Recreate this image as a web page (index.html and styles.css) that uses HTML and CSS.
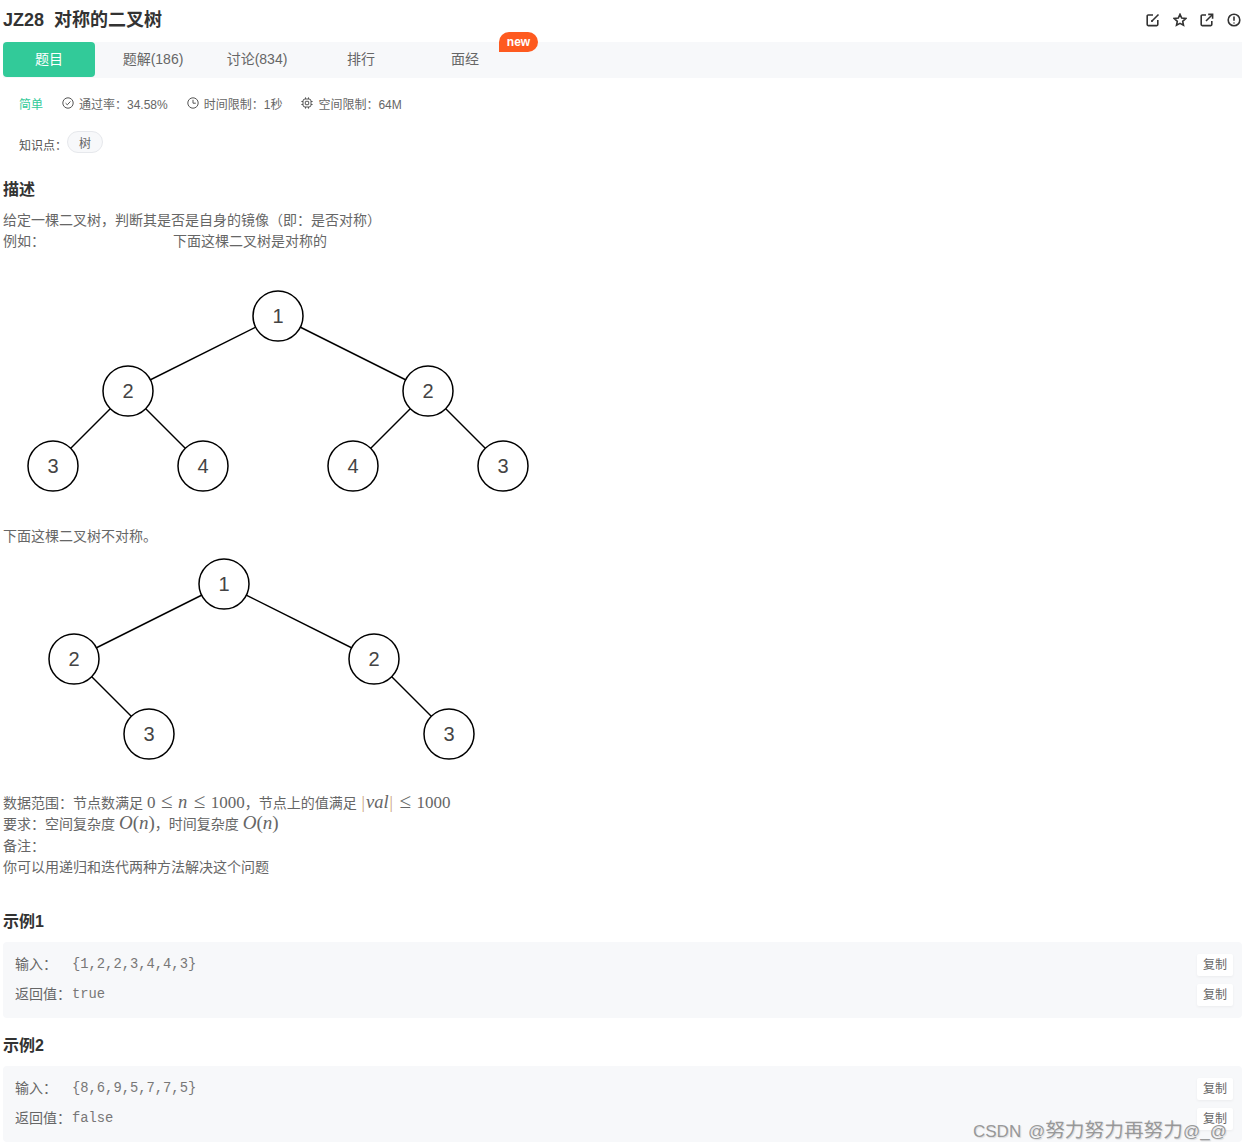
FILE: index.html
```html
<!DOCTYPE html>
<html lang="zh-CN">
<head>
<meta charset="utf-8">
<title>JZ28 对称的二叉树</title>
<link rel="stylesheet" href="styles.css">
</head>
<body>
<main class="page">
  <header class="title-row">
    <h1 class="title">JZ28&nbsp; 对称的二叉树</h1>
    <div class="actions">
      <svg class="action" viewBox="0 0 14 14"><path d="M7 2H2.2a1 1 0 0 0-1 1v8.6a1 1 0 0 0 1 1h8.6a1 1 0 0 0 1-1V7"/><path d="M5.5 8.5 12.5 1.5"/><path d="M5 9l2.2-.4L5.4 6.8z" class="fill"/></svg>
      <svg class="action" viewBox="0 0 14 14"><path d="M7 1.3 8.7 5l4 .5-3 2.8.8 4L7 10.3l-3.5 2 .8-4-3-2.8 4-.5z"/></svg>
      <svg class="action" viewBox="0 0 14 14"><path d="M6 2H2.2a1 1 0 0 0-1 1v8.6a1 1 0 0 0 1 1h8.6a1 1 0 0 0 1-1V8"/><path d="M6 8l6.3-6.3"/><path d="M8.2 1.4h4.4v4.4"/></svg>
      <svg class="action" viewBox="0 0 14 14"><circle cx="7" cy="7" r="5.8"/><path d="M7 3.5v4.3"/><path d="M7 9.4v1.2"/></svg>
    </div>
  </header>

  <nav class="tabs">
    <a class="tab tab-active">题目</a>
    <a class="tab">题解(186)</a>
    <a class="tab">讨论(834)</a>
    <a class="tab">排行</a>
    <a class="tab tab-new">面经<span class="badge">new</span></a>
  </nav>

  <div class="meta">
    <span class="level">简单</span>
    <span class="meta-item"><svg class="meta-icon" viewBox="0 0 12 12"><circle cx="6" cy="6" r="5.2"/><path d="M3.6 6.2 5.3 7.8 8.4 4.5"/></svg>通过率：34.58%</span>
    <span class="meta-item"><svg class="meta-icon" viewBox="0 0 12 12"><circle cx="6" cy="6" r="5.2"/><path d="M6 2.8V6.2H8.8"/></svg>时间限制：1秒</span>
    <span class="meta-item"><svg class="meta-icon" viewBox="0 0 12 12"><rect x="2" y="2" width="8" height="8" rx="2"/><rect x="4.3" y="4.3" width="3.4" height="3.4" rx=".6"/><path d="M4.5 .4V2M7.5 .4V2M4.5 10v1.6M7.5 10v1.6M.4 4.5H2M.4 7.5H2M10 4.5h1.6M10 7.5h1.6"/></svg>空间限制：64M</span>
  </div>

  <div class="topics">
    <span class="topics-label">知识点：</span><span class="pill">树</span>
  </div>

  <h2 class="heading">描述</h2>
  <p class="line">给定一棵二叉树，判断其是否是自身的镜像（即：是否对称）</p>
  <p class="line">例如：<span class="gap"></span>下面这棵二叉树是对称的</p>

  <svg class="tree tree-one" viewBox="0 0 530 246" width="530" height="246">
    <g class="edges">
      <line x1="275" y1="40" x2="125" y2="115"/><line x1="275" y1="40" x2="425" y2="115"/>
      <line x1="125" y1="115" x2="50" y2="190"/><line x1="125" y1="115" x2="200" y2="190"/>
      <line x1="425" y1="115" x2="350" y2="190"/><line x1="425" y1="115" x2="500" y2="190"/>
    </g>
    <g class="nodes">
      <circle cx="275" cy="40" r="25"/><circle cx="125" cy="115" r="25"/><circle cx="425" cy="115" r="25"/>
      <circle cx="50" cy="190" r="25"/><circle cx="200" cy="190" r="25"/><circle cx="350" cy="190" r="25"/><circle cx="500" cy="190" r="25"/>
    </g>
    <g class="labels">
      <text x="275" y="47">1</text><text x="125" y="122">2</text><text x="425" y="122">2</text>
      <text x="50" y="197">3</text><text x="200" y="197">4</text><text x="350" y="197">4</text><text x="500" y="197">3</text>
    </g>
  </svg>

  <p class="line line-after">下面这棵二叉树不对称。</p>

  <svg class="tree tree-two" viewBox="0 0 480 224" width="480" height="224">
    <g class="edges">
      <line x1="221" y1="28" x2="71" y2="103"/><line x1="221" y1="28" x2="371" y2="103"/>
      <line x1="71" y1="103" x2="146" y2="178"/><line x1="371" y1="103" x2="446" y2="178"/>
    </g>
    <g class="nodes">
      <circle cx="221" cy="28" r="25"/><circle cx="71" cy="103" r="25"/><circle cx="371" cy="103" r="25"/>
      <circle cx="146" cy="178" r="25"/><circle cx="446" cy="178" r="25"/>
    </g>
    <g class="labels">
      <text x="221" y="35">1</text><text x="71" y="110">2</text><text x="371" y="110">2</text>
      <text x="146" y="185">3</text><text x="446" y="185">3</text>
    </g>
  </svg>

  <p class="line">数据范围：节点数满足 <span class="math">0<span class="rel">≤</span><i class="var var-n">n</i><span class="rel">≤</span>1000</span>，节点上的值满足 <span class="math"><span class="abs">|</span><i class="var">val</i><span class="abs">|</span><span class="rel">≤</span>1000</span></p>
  <p class="line line-tall">要求：空间复杂度 <span class="math math-big"><i>O</i>(<i>n</i>)</span>，时间复杂度 <span class="math math-big"><i>O</i>(<i>n</i>)</span></p>
  <p class="line">备注：</p>
  <p class="line">你可以用递归和迭代两种方法解决这个问题</p>

  <h2 class="heading heading-example">示例1</h2>
  <section class="example">
    <div class="io"><span class="io-label">输入：</span><code class="io-value">{1,2,2,3,4,4,3}</code><button class="copy">复制</button></div>
    <div class="io"><span class="io-label">返回值：</span><code class="io-value">true</code><button class="copy">复制</button></div>
  </section>

  <h2 class="heading heading-example2">示例2</h2>
  <section class="example">
    <div class="io"><span class="io-label">输入：</span><code class="io-value">{8,6,9,5,7,7,5}</code><button class="copy">复制</button></div>
    <div class="io"><span class="io-label">返回值：</span><code class="io-value">false</code><button class="copy">复制</button></div>
  </section>
</main>
<div class="watermark">CSDN @<span class="watermark-cjk">努力努力再努力</span>@_@</div>
</body>
</html>
```

FILE: styles.css
```css
* { box-sizing: border-box; }
html, body { margin: 0; padding: 0; height: 1148px; overflow: hidden; background: #fff; }
body {
  position: relative;
  font-family: "Liberation Sans", "Noto Sans CJK SC", sans-serif;
  font-size: 14px;
  color: #666;
}
.page { padding-left: 3px; }

.title-row { height: 42px; display: flex; align-items: center; justify-content: space-between; padding-bottom: 2px; }
.title { margin: 0; font-size: 18px; font-weight: 700; color: #333; line-height: 24px; }
.actions { display: flex; gap: 13px; padding-right: 1px; }
.action { width: 14px; height: 14px; fill: none; stroke: #333; stroke-width: 1.6; }
.action .fill { fill: #333; stroke: none; }

.tabs { height: 36px; display: flex; background: #f7f8fa; gap: 12px; }
.tab { position: relative; width: 92px; height: 35px; padding-bottom: 4px; display: flex; align-items: center; justify-content: center; border-radius: 4px; color: #666; font-size: 14px; }
.tab-active { background: #32ca99; color: #fff; }
.badge {
  position: absolute; left: 80px; top: -10px; width: 39px; height: 20px;
  background: #fe5a1f; color: #fff; font-size: 12px; font-weight: 700;
  display: flex; align-items: center; justify-content: center;
  border-radius: 10px 10px 10px 0;
}

.meta { height: 20px; margin-top: 15px; padding-left: 16px; display: flex; align-items: center; font-size: 12px; color: #666; }
.level { color: #32ca99; margin-right: 19px; }
.meta-item { display: flex; align-items: center; margin-right: 19px; }
.meta-icon { width: 12px; height: 12px; margin-right: 5px; fill: none; stroke: #555; stroke-width: 1; }

.topics { height: 24px; margin-top: 17px; padding-left: 16px; display: flex; align-items: center; font-size: 12px; color: #555; }
.topics-label { padding-top: 4px; }
.pill { width: 36px; height: 22px; display: flex; align-items: center; justify-content: center; border: 1px solid #e6e8ec; border-radius: 11px; background: #f7f8fa; color: #666; }

.heading { margin: 0; font-size: 16px; line-height: 22px; font-weight: 700; color: #333; }
.topics + .heading { margin-top: 25px; }
.heading-example { margin-top: 33px; }
.heading-example2 { margin-top: 17px; }

.line { margin: 0; line-height: 21px; font-size: 14px; color: #666; }
.line-tall { margin-bottom: 1px; }
.heading + .line { margin-top: 9px; }
.gap { display: inline-block; width: 128px; }
.line-after { margin-top: 0; }

.tree { display: block; }
.tree-one { margin-top: 24px; margin-bottom: 4px; }
.tree-two { margin-top: 9px; margin-bottom: 13px; }
.edges line { stroke: #000; stroke-width: 1.5; }
.nodes circle { fill: #fff; stroke: #000; stroke-width: 1.5; }
.labels text { font-family: "Liberation Sans", sans-serif; font-size: 20px; text-anchor: middle; fill: #444; }

.math { font-family: "Liberation Serif", serif; font-size: 17px; line-height: 0; color: #666; }
.math-big { font-size: 19px; }
.rel { font-size: 21px; margin: 0 5.5px; line-height: 0; }
.var { font-size: 18.5px; }
.var-n { letter-spacing: 1px; }
.abs { color: #c9a27d; margin: 0 1px; }

.example { position: relative; height: 76px; margin-top: 9px; padding: 7px 0 0 12px; background: #f7f8fa; border-radius: 4px; }
.io { position: relative; height: 30px; display: flex; align-items: center; font-size: 14px; color: #666; }
.io-label { width: 57px; position: relative; top: -1px; }
.io-value { font-family: "Liberation Mono", monospace; font-size: 13.8px; color: #777; }
.copy {
  position: absolute; right: 9px; top: 5px; width: 36px; height: 22px; padding: 0 0 4px;
  border: 0; border-radius: 2px; background: #fff; color: #666;
  font-family: inherit; font-size: 12px; box-shadow: 0 1px 3px rgba(0,0,0,.05);
}

.watermark {
  position: absolute; left: 973px; top: 1116px; font-size: 17px; word-spacing: 2px; line-height: 28px; white-space: nowrap;
  color: rgba(130,130,130,.8); text-shadow: 1px 1px 1px rgba(0,0,0,.12);
}
.watermark-cjk { font-size: 19.7px; }
```
